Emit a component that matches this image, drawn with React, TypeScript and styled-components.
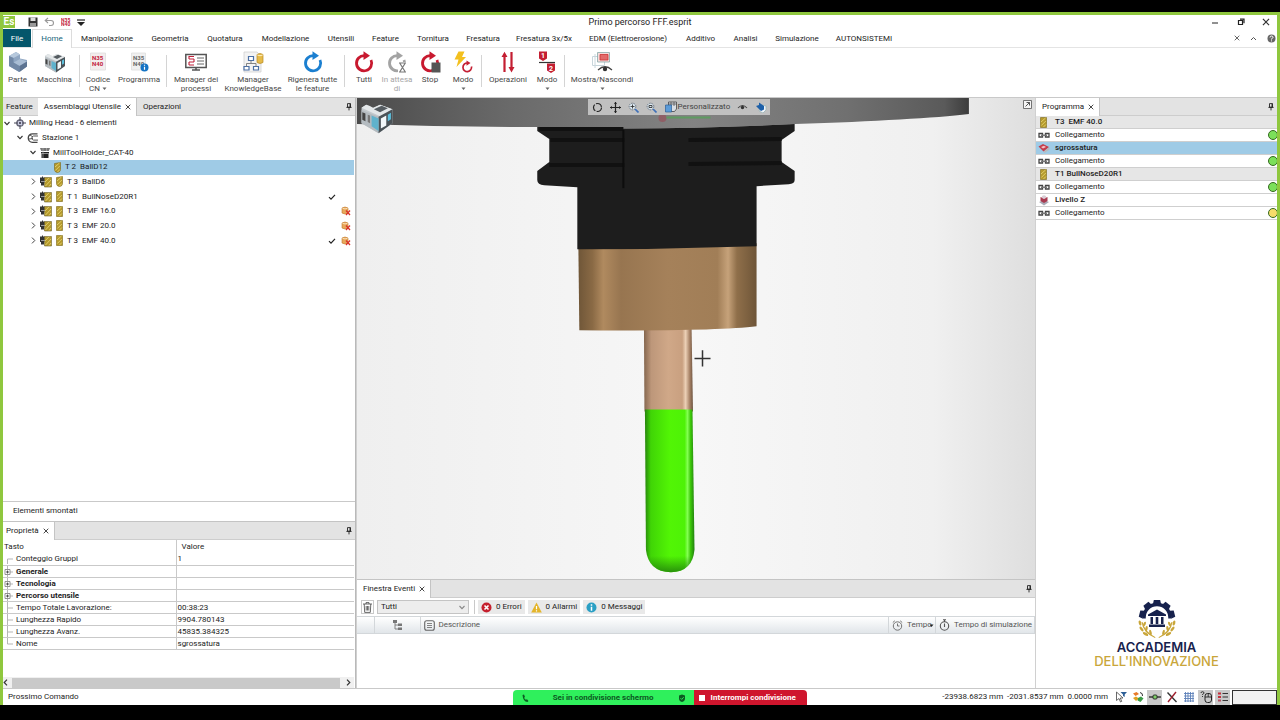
import React from "react";
import styled, { createGlobalStyle, css } from "styled-components";

const GlobalStyle = createGlobalStyle`
  * { box-sizing: border-box; }
  body { margin: 0; background: #000; }
  button, select, table { font: inherit; color: inherit; }
  button { border: 0; background: none; padding: 0; margin: 0; white-space: nowrap; }
  svg { display: block; flex: none; }
`;

/* ---------- frame ---------- */

const Screen = styled.div`
  display: flex;
  flex-direction: column;
  min-height: 100vh;
  padding: 12px 0 15px;
  background: #000;
  font: 8px/12px Roboto, "Open Sans", sans-serif;
  color: #1c1c1c;
`;

const Frame = styled.div`
  flex: 1;
  display: flex;
  flex-direction: column;
  border: 3px solid #8fc73e;
  border-bottom: 0;
  background: #fff;
`;

/* ---------- title bar ---------- */

const TitleBar = styled.header`
  display: grid;
  grid-template-columns: 1fr auto 1fr;
  align-items: center;
  height: 14px;
`;

const QuickAccess = styled.div`
  display: flex;
  align-items: center;
  gap: 6px;
`;

const AppBadge = styled.span`
  width: 12px;
  margin-right: 7px;
  background: #8fc73e;
  color: #fff;
  font-size: 10px;
  font-weight: 600;
  text-align: center;
`;

const Title = styled.h1`
  margin: 0;
  font-size: 9px;
  font-weight: 400;
`;

const WindowButtons = styled.div`
  display: flex;
  justify-content: flex-end;
  gap: 16px;
  padding-right: 7px;
`;

/* ---------- menu ---------- */

const MenuBar = styled.nav`
  display: flex;
  align-items: stretch;
  height: 19px;
  border-bottom: 1px solid #e4e4e4;
`;

const MenuTab = styled.button<{ $w: number; $kind?: "file" | "active" }>`
  min-width: ${(p) => p.$w}px;
  padding-top: 1px;
  ${(p) =>
    p.$kind === "file" &&
    css`
      margin-right: 1px;
      background: #04566b;
      color: #fff;
    `}
  ${(p) =>
    p.$kind === "active" &&
    css`
      margin-bottom: -1px;
      padding-top: 0;
      border: 1px solid #dcdcdc;
      border-bottom: 0;
      background: #fff;
      color: #17657a;
    `}
`;

const MenuTools = styled.div`
  display: flex;
  align-items: center;
  gap: 10px;
  margin-left: auto;
  padding-right: 1px;
`;

/* ---------- ribbon ---------- */

const Ribbon = styled.div`
  display: flex;
  height: 50px;
  border-bottom: 1px solid #c9c9c9;
`;

const RibbonGroup = styled.div`
  display: flex;
  align-items: flex-start;
  padding-right: 2px;
  & + & {
    padding-left: 2px;
    border-left: 1px solid #dadada;
    border-image: linear-gradient(#fff 8px, #d4d4d4 8px, #d4d4d4 38px, #fff 38px) 1;
  }
`;

const RibbonButton = styled.button<{ $w: number; $muted?: boolean }>`
  display: flex;
  flex-direction: column;
  align-items: center;
  width: ${(p) => p.$w}px;
  padding-top: 3px;
  color: ${(p) => (p.$muted ? "#a5a5a5" : "#484848")};
  line-height: 9px;
  svg { margin-bottom: 2px; }
`;

const RibbonLabel = styled.span`
  display: flex;
  flex-direction: column;
  align-items: center;
`;

const RibbonLine = styled.span`
  display: flex;
  gap: 2px;
  svg { margin: 0; }
`;

/* ---------- docked panels ---------- */

const Workspace = styled.main`
  flex: 1;
  display: grid;
  grid-template-columns: 353px minmax(0, 1fr) 241px;
  border-bottom: 1px solid #c9c9c9;
`;

const Dock = styled.section`
  display: flex;
  flex-direction: column;
  min-width: 0;
  background: #fff;
`;

const LeftDock = styled(Dock)`
  border-right: 1px solid #b9b9b9;
`;

const CenterDock = styled(Dock)`
  border: solid #d0d0d0;
  border-width: 0 1px;
`;

const TabStrip = styled.div<{ $top?: boolean }>`
  display: flex;
  align-items: stretch;
  height: ${(p) => (p.$top ? 19 : 18)}px;
  background: #e3e3e3;
  border-bottom: 1px solid #cdcdcd;
  ${(p) => p.$top && css`border-top: 1px solid #c4c4c4;`}
`;

const DockTab = styled.button<{ $active?: boolean; $wide?: boolean }>`
  display: flex;
  align-items: center;
  gap: 4px;
  padding: 0 5px 0 ${(p) => (p.$wide ? 6 : 3)}px;
  ${(p) =>
    p.$active &&
    css`
      margin-bottom: -1px;
      border-right: 1px solid #c4c4c4;
      background: #fff;
    `}
`;

const PinButton = styled.button`
  margin-left: auto;
  padding-right: 3px;
`;

/* ---------- tool tree ---------- */

const Tree = styled.ul`
  display: grid;
  grid-auto-rows: 1fr;
  height: 132px;
  margin: 0 0 auto;
  padding: 0;
  list-style: none;
`;

const TreeRow = styled.li<{ $depth: number; $selected?: boolean }>`
  display: flex;
  align-items: center;
  gap: 3px;
  margin-right: 1px;
  padding-left: ${(p) => p.$depth * 13}px;
  background: ${(p) => (p.$selected ? "#9fcbe6" : "none")};
`;

const Twisty = styled.button`
  width: 8px;
  height: 12px;
  display: flex;
  align-items: center;
  justify-content: center;
`;

const RowMarks = styled.span`
  display: flex;
  align-items: center;
  gap: 5px;
  margin-left: auto;
  padding-right: 3px;
`;

const MarkSlot = styled.span`
  width: 10px;
  height: 10px;
`;

const Unmounted = styled.div`
  height: 20px;
  padding: 3px 10px;
  border-top: 1px solid #c9c9c9;
`;

/* ---------- properties ---------- */

const PropertyPane = styled.div`
  min-height: 137px;
`;

const PropertyTable = styled.table`
  width: 351px;
  table-layout: fixed;
  border-collapse: collapse;
  line-height: 11px;
  th, td {
    height: 12px;
    padding: 0 0 0 1px;
    text-align: left;
    font-weight: 400;
  }
  td + td { border-left: 1px solid #c9c9c9; }
  thead th { height: 13px; }
  thead th + th { padding-left: 5px; border-left: 1px solid #c9c9c9; }
  tbody tr { border-bottom: 1px solid #c9c9c9; }
`;

const PropertyName = styled.span<{ $bold?: boolean }>`
  display: flex;
  align-items: center;
  gap: 2px;
  font-weight: ${(p) => (p.$bold ? 700 : 400)};
`;

const HScroll = styled.div`
  display: flex;
  align-items: center;
  justify-content: space-between;
  gap: 4px;
  height: 11px;
  margin-right: 1px;
  background: #f0f0f0;
`;

const HThumb = styled.div`
  flex: 1;
  height: 10px;
  margin-right: 2px;
  background: #c9c9c9;
`;

/* ---------- 3D view ---------- */

const Viewport = styled.div`
  position: relative;
  flex: 1;
  min-height: 300px;
  overflow: hidden;
  background: #f3f3f3;
`;

const Scene = styled.svg`
  position: absolute;
  inset: 0;
  width: 100%;
  height: 100%;
`;

const MachineBadge = styled.div`
  position: absolute;
  top: 2px;
  left: 3px;
`;

const ViewTools = styled.div`
  position: absolute;
  top: 1px;
  left: 34%;
  display: flex;
  align-items: center;
  gap: 7px;
  height: 16px;
  padding: 0 3px 0 4px;
  background: #c0c0c0;
  color: #444;
`;

const ViewMode = styled.button`
  display: flex;
  align-items: center;
  gap: 1px;
  margin-left: 1px;
`;

const PopOut = styled.button`
  position: absolute;
  top: 2px;
  right: 3px;
`;

/* ---------- events ---------- */

const EventBar = styled.div`
  display: flex;
  align-items: center;
  gap: 3px;
  height: 18px;
  padding-left: 4px;
`;

const TrashButton = styled.button`
  display: grid;
  place-items: center;
  width: 13px;
  height: 14px;
  border: 1px solid #c9c9c9;
`;

const FilterBox = styled.label`
  display: flex;
  align-items: center;
  width: 92px;
  height: 14px;
  margin-right: 2px;
  padding-right: 3px;
  border: 1px solid #c4c4c4;
  background: #ededed;
`;

const FilterSelect = styled.select`
  flex: 1;
  appearance: none;
  border: 0;
  padding: 0 3px;
  background: none;
`;

const Counter = styled.button`
  display: flex;
  align-items: center;
  gap: 4px;
  height: 14px;
  padding: 0 3px;
  background: #e9e9e9;
`;

const Divider = styled.span`
  width: 1px;
  height: 14px;
  background: #c9c9c9;
`;

const EventTable = styled.table`
  width: 100%;
  height: 18px;
  margin: 0 0 54px;
  table-layout: fixed;
  border-collapse: collapse;
  color: #555;
  tr { background: linear-gradient(#fff, #dfe4e8); }
  th {
    height: 17px;
    padding: 0 3px;
    border: solid #d3d7da;
    border-width: 1px 1px 1px 0;
    font-weight: 400;
    text-align: left;
  }
`;

const HeadCell = styled.span<{ $center?: boolean }>`
  display: flex;
  align-items: center;
  justify-content: ${(p) => (p.$center ? "center" : "flex-start")};
  gap: 4px;
  white-space: nowrap;
`;

const SortMark = styled.span`
  margin-left: -7px;
`;

/* ---------- program ---------- */

const ProgramList = styled.ul`
  margin: 0;
  padding: 0;
  list-style: none;
`;

const ProgramRow = styled.li<{ $kind: "tool" | "link" | "op"; $selected?: boolean }>`
  display: flex;
  align-items: center;
  gap: 6px;
  height: 13px;
  padding-left: 2px;
  border-bottom: 1px solid #cfcfcf;
  overflow: hidden;
  font-weight: ${(p) => (p.$kind === "link" ? 400 : 500)};
  background: ${(p) => (p.$selected ? "#9fcbe6" : p.$kind === "tool" ? "#e6e6e6" : "#fff")};
`;

const StatusLamp = styled.i<{ $color: string }>`
  width: 10px;
  height: 10px;
  margin-left: auto;
  margin-right: -1px;
  border: 1px solid #356a20;
  border-radius: 50%;
  background: ${(p) => p.$color};
`;

const Brand = styled.div`
  display: flex;
  flex-direction: column;
  align-items: center;
  margin: auto 0 20px;
  font: 13px/14px Inter, sans-serif;
`;

const BrandLine = styled.span<{ $gold?: boolean }>`
  font-weight: ${(p) => (p.$gold ? 500 : 600)};
  color: ${(p) => (p.$gold ? "#c9a63a" : "#17224d")};
`;

/* ---------- status bar ---------- */

const StatusBar = styled.footer`
  position: relative;
  display: flex;
  align-items: center;
  height: 16px;
  padding-left: 5px;
`;

const Coordinates = styled.span`
  margin-left: auto;
  margin-right: 5px;
  white-space: pre;
`;

const StatusTool = styled.button<{ $on?: boolean }>`
  display: grid;
  place-items: center;
  width: 17px;
  height: 15px;
  border-right: 2px solid #fff;
  background: ${(p) => (p.$on ? "#c9c9c9" : "none")};
`;

const ProgressBox = styled.div`
  width: 45px;
  height: 15px;
  border: 1px solid #333;
  background: #f2f2f2;
`;

const ShareBar = styled.div`
  position: absolute;
  left: 40%;
  bottom: 0;
  display: flex;
  height: 15px;
  font-weight: 700;
`;

const ShareState = styled.div`
  display: flex;
  align-items: center;
  justify-content: space-between;
  width: 181px;
  padding: 0 8px;
  border-radius: 4px 0 0 0;
  background: #2ff05c;
  color: #0c5a22;
`;

const ShareStop = styled.button`
  display: flex;
  align-items: center;
  gap: 6px;
  width: 113px;
  padding-left: 5px;
  border-radius: 0 4px 0 0;
  background: #cf152d;
  color: #fff;
`;

/* ---------- icons ---------- */

type IconProps = { w: number; h?: number; box?: string; children: React.ReactNode };
const Icon = ({ w, h, box, children }: IconProps) => (
  <svg width={w} height={h ?? w} viewBox={box ?? `0 0 ${w} ${h ?? w}`} fill="none" aria-hidden="true">
    {children}
  </svg>
);

const Cross = ({ size = 6, color = "#333" }: { size?: number; color?: string }) => (
  <Icon w={size} box="0 0 6 6"><path d="M.7.7l4.6 4.6M5.3.7L.7 5.3" stroke={color} strokeWidth=".9" /></Icon>
);

const Pin = () => (
  <Icon w={6} h={8}><path d="M1.5.6h3v3.6h-3zM.4 4.4h5.2M3 4.4v3M4 .6v3.6" stroke="#222" strokeWidth=".9" /></Icon>
);

const ChevronDown = ({ color = "#333" }: { color?: string }) => (
  <Icon w={6} h={5}><path d="M.5 1l2.5 2.6L5.500 1" stroke={color} strokeWidth="1.1" /></Icon>
);

const ChevronRight = () => (
  <Icon w={5} h={7}><path d="M1 .6l2.800 2.900L1 6.400" stroke="#444" strokeWidth="1" /></Icon>
);

const SmallArrow = ({ color = "#666" }: { color?: string }) => (
  <Icon w={5} h={9}><path d="M.5 3.500h4L2.500 6z" fill={color} /></Icon>
);

const Check = () => (
  <Icon w={8} h={8}><path d="M1 4.200l2 2L7 1.800" stroke="#222" strokeWidth="1.200" /></Icon>
);

const Cutter = ({ round }: { round?: boolean }) => (
  <Icon w={9} h={11}>
    <path d={round ? "M1.500 1.500L7.500.5v7.500Q7 10.500 4.300 10.500Q1.500 10 1.500 7.500z" : "M1.500.5h6v10h-6z"} fill="#b59a2c" stroke="#7b6618" strokeWidth=".6" />
    <path d="M2 5L6.500 1M2.300 8.500L6.800 4M4.500 10l2.400-2.500" stroke="#e0ce6c" strokeWidth="1" />
  </Icon>
);

const HolderCutter = () => (
  <Icon w={12} h={12}>
    <path d="M0 1.500h2v-1h1v1h2v5H4v3H1V7H0z" fill="#333" />
    <path d="M4.500 1.500h7v9.500h-7z" fill="#b59a2c" stroke="#6f6430" strokeWidth=".6" />
    <path d="M5 6l4-4.200M5.500 10l5.500-6M9 10.500l2-2.500" stroke="#e0ce6c" strokeWidth="1" />
    <path d="M1 5.500h4" stroke="#999" />
  </Icon>
);

const BadDatabase = () => (
  <Icon w={10} h={10}>
    <path d="M1 2q3-2 6 0v5q-3 2-6 0z" fill="#e8a85c" stroke="#c07a2d" strokeWidth=".6" />
    <path d="M1.500 2.300q2.500 1.200 5 0" stroke="#fbe0b5" />
    <path d="M5 4.500l4 4.500M9 4.500L5 9" stroke="#d8342a" strokeWidth="1.300" />
  </Icon>
);

const SpindleIcon = () => (
  <Icon w={12} h={12}>
    <circle cx="6" cy="6" r="3.200" stroke="#667" strokeWidth="1.300" fill="#c9cbe0" />
    <path d="M6 0v4M6 8v4M0 6h4M8 6h4" stroke="#445" strokeWidth="1" />
    <circle cx="6" cy="6" r="1" fill="#334" />
  </Icon>
);

const StationIcon = () => (
  <Icon w={12} h={12}>
    <path d="M10.500 1.800H5.500a4.200 4.200 0 0 0 0 8.500h5" stroke="#444" strokeWidth="1.300" />
    <path d="M11 4H6.500a2.100 2.100 0 0 0 0 4.100H11M3 3l3 2M2 7l4-.5" stroke="#555" strokeWidth="1" />
  </Icon>
);

const HolderIcon = () => (
  <Icon w={10} h={11}>
    <path d="M0 1h10L8.800 4H1.200z" fill="#777" />
    <path d="M1 5h8v1.500H1zM1.500 7h7v4h-7z" fill="#222" />
    <path d="M3 1v10M6.500 1v3" stroke="#bbb" strokeWidth=".6" />
  </Icon>
);

const ArrowRing = ({ color, children }: { color: string; children?: React.ReactNode }) => (
  <Icon w={22} h={22}>
    <path d="M11.500 4.600A7.600 7.600 0 1 0 18 9" stroke={color} strokeWidth="2.800" />
    <path d="M10.500.2l6.500 4.600-6.500 4.200z" fill={color} />
    {children}
  </Icon>
);

const PartIcon = () => (
  <Icon w={22}>
    <path d="M2 5l7-4 4 2.500v4L20 9v6.500L12 21 2 15z" fill="#8fa6c2" />
    <path d="M2 5l7-4 4 2.500L6.500 7z" fill="#b6c8dc" />
    <path d="M6.500 11.500L13 8l7 2.500L12.500 15z" fill="#a9bdd4" />
    <path d="M2 5l4.500 2v4.500l6 3.500V21L2 15z" fill="#7188a6" />
    <path d="M12.500 15L20 10.500v5L12.500 21z" fill="#5c7391" />
  </Icon>
);

const MachineIcon = ({ size = 22 }: { size?: number }) => (
  <Icon w={size} box="0 0 22 22">
    <path d="M1 5l3-2 3 1.500 1 1L13 3l8 3v9l-9 6.500L1 15z" fill="#c3c9cd" />
    <path d="M1 5l3-2 2 .8L8.500 5 13 3l8 3-8 4.500z" fill="#e3e7e9" />
    <path d="M9 6l5-2.200 4 1.500-5 2.700z" fill="#555c61" />
    <path d="M1 6.500l11 4.300v10.700L1 15z" fill="#b4bbc0" />
    <path d="M12 10.800l9-4.800v9l-9 6.500z" fill="#4a5257" />
    <path d="M7.500 10l4.500 2v8l-4.500-3z" fill="#5fb2cc" />
    <path d="M13.500 12l3.500-2v6.500l-3.500 2z" fill="#f2f7f9" />
    <path d="M18 9.500l2-1.200v4.200l-2 1.200z" fill="#5cc0dd" />
    <path d="M1.500 8l2 .8v5l-2-1z" fill="#444" />
    <path d="M5 9.500l1.500.6v5L5 14.300z" fill="#777" />
  </Icon>
);

const CodeText = ({ fill, x = 4 }: { fill: string; x?: number }) => (
  <g fill={fill} fontFamily="Roboto, sans-serif" fontSize="6" fontWeight="700">
    <text x={x} y="8.500">N35</text>
    <text x={x} y="14.500">N40</text>
  </g>
);

const CodeIcon = () => (
  <Icon w={20} h={22}><path d="M2.500 2h15v17h-15z" fill="#f3eded" stroke="#ddd" strokeWidth=".8" /><CodeText fill="#c2203a" /></Icon>
);

const ProgramIcon = () => (
  <Icon w={20} h={22}>
    <path d="M2.500 2h14v17h-14z" fill="#f0f0f0" stroke="#ddd" strokeWidth=".8" />
    <CodeText fill="#666" />
    <circle cx="15.500" cy="16.500" r="4" fill="#1473c4" />
    <path d="M15.500 15.700v3M15.500 13.800v1" stroke="#fff" strokeWidth="1.200" />
  </Icon>
);

const ProcessIcon = () => (
  <Icon w={22}>
    <path d="M.8 3.500h20.400v13H.8z" stroke="#555" strokeWidth="1.500" fill="#fff" />
    <path d="M7 19h8M11 17v2" stroke="#555" strokeWidth="1.600" />
    <path d="M4 5.500h5M4 8h5M4 11h5M4 14h5M4 5v3M9 8v3M4 11v3" stroke="#c2203a" strokeWidth="1.100" />
    <path d="M12 7h7M12 10h7M12 13h7" stroke="#666" strokeWidth="1" />
  </Icon>
);

const KnowledgeIcon = () => (
  <Icon w={22}>
    <path d="M2 1h13l4 4v16H2z" fill="#f3f3f3" stroke="#ccc" strokeWidth=".7" />
    <path d="M6.500 5.500h5v4h-5zM2 15.500h5V19H2zM11.500 15.500h5V19h-5z" fill="#fff" stroke="#4a6fa5" strokeWidth="1.200" />
    <path d="M9 9.500v3M4.500 15.500v-3H14v3" stroke="#777" strokeWidth=".9" />
    <path d="M15 3.500q3-2 6 0v8q-3 2-6 0z" fill="#e6bb4a" stroke="#b78a22" strokeWidth=".7" />
    <path d="M15.300 4q2.700 1.500 5.400 0" stroke="#fff1c4" />
  </Icon>
);

const UpDownIcon = () => (
  <Icon w={16} h={22}>
    <path d="M4.500 4v17M11.500 1v17" stroke="#c41e32" strokeWidth="2.200" />
    <path d="M1.500 6L4.500.8 7.500 6zM8.500 16l3 5.500 3-5.500z" fill="#c41e32" />
  </Icon>
);

const ShieldsIcon = () => (
  <Icon w={20} h={22}>
    <path d="M2 .5h8v7l-4 2.500-4-2.500zM10 12.500h8v7L14 22l-4-2.500z" fill="#c41e32" />
    <path d="M2 11.500h16" stroke="#333" strokeWidth="1.200" />
    <g fill="#fff" fontFamily="Roboto, sans-serif" fontSize="7" fontWeight="700">
      <text x="4" y="7">1</text>
      <text x="12" y="19.500">2</text>
    </g>
  </Icon>
);

const ModeIcon = () => (
  <Icon w={20} h={22}>
    <path d="M5.500.5h6L9 6h4L3.500 16l2-7.500H1.500z" fill="#f3c01f" />
    <path d="M14.500 12a4.300 4.300 0 1 0 4 3.500" stroke="#c41e32" strokeWidth="1.700" />
    <path d="M13.500 9.500l4 2.600-4 2.600z" fill="#c41e32" />
  </Icon>
);

const ShowHideIcon = () => (
  <Icon w={22}>
    <path d="M1.500 5.500h12v9h-12zM4 3v14" stroke="#c8d6dc" strokeWidth="1" />
    <path d="M6.500 1.500h12v9.500h-12z" fill="#f6dada" stroke="#8aa" strokeWidth=".8" />
    <path d="M9 3.500h8v5.500H9z" fill="#e26a6a" stroke="#c33" strokeWidth=".8" />
    <path d="M7 19q7-6.500 14 0" stroke="#444" strokeWidth="1.200" />
    <circle cx="14" cy="18" r="2.200" fill="#333" />
  </Icon>
);

const SaveIcon = () => (
  <Icon w={10}><path d="M.5.500h9v9h-9z" fill="#333" /><path d="M2.500.5h5v3.500h-5z" fill="#ddd" /><path d="M2 6h6v3.500H2z" fill="#999" /></Icon>
);

const UndoIcon = () => (
  <Icon w={11} h={10}><path d="M4 1L1.200 3.500 4 6M1.500 3.500h5.500a2.500 2.500 0 0 1 0 5H5" stroke="#999" strokeWidth="1.100" /></Icon>
);

const QuickCodeIcon = () => (
  <Icon w={10}>
    <g fill="#c2203a" fontFamily="Roboto, sans-serif" fontSize="5" fontWeight="700"><text x="0" y="4.500">N35</text><text x="0" y="9">N40</text></g>
  </Icon>
);

const LinkIcon = () => (
  <Icon w={12} h={9}>
    <path d="M1 2.500h3.500v3.500H1zM7.500 2.500H11v3.500H7.500z" stroke="#444" strokeWidth="1.300" />
    <path d="M3 4.300h6" stroke="#777" strokeWidth="1.600" />
  </Icon>
);

const RoughIcon = () => (
  <Icon w={12} h={10}>
    <path d="M.5 3.500L5 1l6 3-5.500 4.500z" fill="#c43c4a" />
    <path d="M6 8.500L11.500 4v2.500L6.500 10z" fill="#b9b9b9" />
    <path d="M3 4l3-1.300 2 1.300-3 1.500z" fill="#f0c0c4" />
  </Icon>
);

const ZLevelIcon = () => (
  <Icon w={12} h={11}>
    <path d="M1 7l5-2 5 2-5 3.500z" fill="#a9a9b5" />
    <path d="M2.500 2l3.500 1.500L9.500 2v4L6 8 2.500 6z" fill="#a83a50" />
    <path d="M4 1l2-.7L8 1v2L6 4 4 3z" fill="#d9cdd5" />
  </Icon>
);

const Magnifier = ({ mark }: { mark: string }) => (
  <Icon w={11}>
    <circle cx="4.500" cy="4.500" r="3.300" stroke="#5a6470" strokeWidth=".9" strokeDasharray="1.500 .8" fill="#dbe7f0" />
    <path d={mark} stroke="#333" strokeWidth=".9" />
    <path d="M7 7l3.500 3.500" stroke="#3f70b8" strokeWidth="1.700" />
  </Icon>
);

const BrandMark = () => (
  <Icon w={40} h={40}>
    <path d="M7 18.500v-1a13 13 0 0 1 26 0v1" stroke="#17224d" strokeWidth="3.500" />
    <g fill="#17224d">
      {[-76, -38, 0, 38, 76].map((a) => (
        <path key={a} d="M16 4l.8-4h6.400l.8 4z" transform={`rotate(${a} 20 18)`} />
      ))}
    </g>
    <path d="M20 9.500l9 5v1.500H11v-1.500zM12 24.500h16V27H12zM13.500 17h2.500v7h-2.500zM18.700 17h2.600v7h-2.600zM24 17h2.500v7H24z" fill="#17224d" />
    <g fill="#c9a63a">
      {[0, 1].map((i) => (
        <g key={i} transform={i ? "translate(40 0) scale(-1 1)" : undefined}>
          <ellipse cx="3" cy="23" rx="1.300" ry="2.600" transform="rotate(-15 3 23)" />
          <ellipse cx="7.500" cy="24" rx="1.200" ry="2.400" transform="rotate(25 7.500 24)" />
          <ellipse cx="4.500" cy="29" rx="1.300" ry="2.800" transform="rotate(-40 4.500 29)" />
          <ellipse cx="9.500" cy="28.500" rx="1.200" ry="2.600" transform="rotate(10 9.500 28.500)" />
          <ellipse cx="8.500" cy="34" rx="1.300" ry="3" transform="rotate(-62 8.500 34)" />
          <ellipse cx="13.500" cy="32.500" rx="1.200" ry="2.800" transform="rotate(-15 13.500 32.500)" />
          <path d="M4.500 22Q6 33 18 38l.5-.8Q8 32 5.500 22z" />
        </g>
      ))}
    </g>
  </Icon>
);

const ToolScene = () => (
  <Scene viewBox="0 0 677 482" preserveAspectRatio="xMidYMin slice" role="img" aria-label="Vista 3D utensile">
    <defs>
      <linearGradient id="bg"><stop offset="0" stopColor="#efefef" /><stop offset=".5" stopColor="#f7f7f7" /><stop offset=".85" stopColor="#f0f0f0" /><stop offset="1" stopColor="#dedede" /></linearGradient>
      <linearGradient id="disc"><stop offset="0" stopColor="#4b4b4b" /><stop offset=".25" stopColor="#6a6a6a" /><stop offset=".55" stopColor="#838383" /><stop offset=".8" stopColor="#707070" /><stop offset=".96" stopColor="#5a5a5a" /><stop offset="1" stopColor="#3c3c3c" /></linearGradient>
      <linearGradient id="collet"><stop offset="0" stopColor="#6f5638" /><stop offset=".08" stopColor="#8a6a45" /><stop offset=".14" stopColor="#b08a5f" /><stop offset=".24" stopColor="#977550" /><stop offset=".5" stopColor="#a5815a" /><stop offset=".78" stopColor="#a17e57" /><stop offset=".84" stopColor="#c6a27a" /><stop offset=".89" stopColor="#8f6f4a" /><stop offset="1" stopColor="#6e5538" /></linearGradient>
      <linearGradient id="shank"><stop offset="0" stopColor="#84664e" /><stop offset=".15" stopColor="#bd977a" /><stop offset=".5" stopColor="#d0a888" /><stop offset=".78" stopColor="#c9a080" /><stop offset=".85" stopColor="#ecd0b6" /><stop offset=".93" stopColor="#a98468" /><stop offset="1" stopColor="#6d5440" /></linearGradient>
      <linearGradient id="flute"><stop offset="0" stopColor="#27850c" /><stop offset=".12" stopColor="#40d506" /><stop offset=".5" stopColor="#52f505" /><stop offset=".8" stopColor="#4ef207" /><stop offset=".86" stopColor="#84ff52" /><stop offset=".92" stopColor="#3cc80a" /><stop offset="1" stopColor="#228010" /></linearGradient>
      <linearGradient id="tip" x1="0" y1="0" x2="0" y2="1"><stop offset=".9" stopColor="#1f7a0c" stopOpacity="0" /><stop offset="1" stopColor="#1f7a0c" stopOpacity=".8" /></linearGradient>
    </defs>
    <path d="M0 0h677v482H0z" fill="url(#bg)" />
    <path d="M0 0h611v16Q560 22 437 26Q300 33 180 29Q90 29 0 26z" fill="url(#disc)" />
    <path d="M286.500 225h47.500l1.500 88h-48.500z" fill="url(#shank)" />
    <path d="M221 145h178v83q-40 5-177 4z" fill="url(#collet)" />
    <path d="M180 29Q300 33 437 26v7l-13 9v22l13 9v9q0 4-6 4l-32 2v60q-90 3-179 3V89l-33-2q-7 0-7-5V73l12-9V41l-12-8z" fill="#1d1d1d" />
    <path d="M182 31h84M193 42h74M331 42l93-1M192 67h75M331 66l93-1" stroke="#111" strokeWidth="4" />
    <path d="M266 32v58" stroke="#0d0d0d" strokeWidth="2" />
    <path d="M287.500 311h47.500l2 140q-2 22-23.500 22.500q-22.500-.5-25-22.500z" fill="url(#flute)" />
    <path d="M287.500 311h47.500l2 140q-2 22-23.500 22.500q-22.500-.5-25-22.500z" fill="url(#tip)" />
    <circle cx="305" cy="20" r="4" fill="#9a4a55" opacity=".6" />
    <path d="M309 19.500h44" stroke="#4fa653" strokeWidth="2" opacity=".7" />
    <path d="M337 260h16M345 252v16" stroke="#333" strokeWidth="1.500" />
  </Scene>
);

/* ---------- data ---------- */

const menus: [string, number][] = [
  ["Manipolazione", 70], ["Geometria", 56], ["Quotatura", 54], ["Modellazione", 67], ["Utensili", 44],
  ["Feature", 45], ["Tornitura", 50], ["Fresatura", 50], ["Fresatura 3x/5x", 72], ["EDM (Elettroerosione)", 96],
  ["Additivo", 49], ["Analisi", 41], ["Simulazione", 62], ["AUTONSISTEMI", 72],
];

type Tool = { label: string; w: number; icon: React.ReactNode; muted?: boolean };
const ribbon: Tool[][] = [
  [
    { label: "Parte", w: 29, icon: <PartIcon /> },
    { label: "Macchina", w: 45, icon: <MachineIcon /> },
  ],
  [
    { label: "Codice\nCN ▾", w: 32, icon: <CodeIcon /> },
    { label: "Programma", w: 50, icon: <ProgramIcon /> },
  ],
  [
    { label: "Manager dei\nprocessi", w: 54, icon: <ProcessIcon /> },
    { label: "Manager\nKnowledgeBase", w: 60, icon: <KnowledgeIcon /> },
    { label: "Rigenera tutte\nle feature", w: 59, icon: <ArrowRing color="#1b7fd0" /> },
  ],
  [
    { label: "Tutti", w: 34, icon: <ArrowRing color="#c8192f" /> },
    {
      label: "In attesa\ndi",
      w: 32,
      muted: true,
      icon: (
        <ArrowRing color="#a3a3a3">
          <path d="M12 11h9v10h-9z" fill="#fff" />
          <path d="M13 12h7M13 21h7M14 12.500l5 8M19 12.500l-5 8" stroke="#777" strokeWidth="1.200" />
        </ArrowRing>
      ),
    },
    { label: "Stop", w: 34, icon: <ArrowRing color="#c8192f"><path d="M12.500 11.500h9v10h-9z" fill="#555" /></ArrowRing> },
    { label: "Modo\n▾", w: 32, icon: <ModeIcon /> },
  ],
  [
    { label: "Operazioni", w: 48, icon: <UpDownIcon /> },
    { label: "Modo\n▾", w: 30, icon: <ShieldsIcon /> },
  ],
  [{ label: "Mostra/Nascondi\n▾", w: 70, icon: <ShowHideIcon /> }],
];

const assemblies = [
  { name: "T 3  BallD6", round: true },
  { name: "T 1  BullNoseD20R1", check: true },
  { name: "T 3  EMF 16.0", bad: true },
  { name: "T 3  EMF 20.0", bad: true },
  { name: "T 3  EMF 40.0", check: true, bad: true },
];

const properties: { name: string; value?: string; group?: boolean }[] = [
  { name: "Conteggio Gruppi", value: "1" },
  { name: "Generale", group: true },
  { name: "Tecnologia", group: true },
  { name: "Percorso utensile", group: true },
  { name: "Tempo Totale Lavorazione:", value: "00:38:23" },
  { name: "Lunghezza Rapido", value: "9904.780143" },
  { name: "Lunghezza Avanz.", value: "45835.384325" },
  { name: "Nome", value: "sgrossatura" },
];

const GREEN = "#7be05a";
const program: { name: string; kind: "tool" | "link" | "op"; icon?: React.ReactNode; lamp?: string; selected?: boolean }[] = [
  { name: "T3  EMF 40.0", kind: "tool" },
  { name: "Collegamento", kind: "link", lamp: GREEN },
  { name: "sgrossatura", kind: "op", icon: <RoughIcon />, selected: true },
  { name: "Collegamento", kind: "link", lamp: GREEN },
  { name: "T1 BullNoseD20R1", kind: "tool" },
  { name: "Collegamento", kind: "link", lamp: GREEN },
  { name: "Livello Z", kind: "op", icon: <ZLevelIcon /> },
  { name: "Collegamento", kind: "link", lamp: "#f6dc6a" },
];

const IconSlot = styled.span`
  display: grid;
  place-items: center;
  width: 11px;
`;

const Label = styled.span`
  white-space: pre;
`;

/* ---------- page ---------- */

const RibbonItem = ({ tool }: { tool: Tool }) => (
  <RibbonButton $w={tool.w} $muted={tool.muted}>
    {tool.icon}
    <RibbonLabel>
      {tool.label.split("\n").map((line) => (
        <RibbonLine key={line}>
          {line.replace("▾", "").trim()}
          {line.endsWith("▾") && <SmallArrow />}
        </RibbonLine>
      ))}
    </RibbonLabel>
  </RibbonButton>
);

const TreeGuide = ({ i, group }: { i: number; group?: boolean }) => (
  <Icon w={10} h={11}>
    <path d={i === 0 ? "M3.500 6v5M3.500 6H9" : i === 7 ? "M3.500 0v6H9" : "M3.500 0v11M3.500 6H9"} stroke="#b5b5b5" />
    {group && (
      <>
        <path d="M1 3.500h5v5H1z" fill="#fff" stroke="#888" strokeWidth=".9" />
        <path d="M2 6h3M3.500 4.500v3" stroke="#333" strokeWidth=".8" />
      </>
    )}
  </Icon>
);

export default function App() {
  return (
    <Screen>
      <GlobalStyle />
      <Frame>
        <TitleBar>
          <QuickAccess>
            <AppBadge>Es</AppBadge>
            <button aria-label="Salva"><SaveIcon /></button>
            <button aria-label="Annulla"><UndoIcon /></button>
            <button aria-label="Codice CN"><QuickCodeIcon /></button>
            <button aria-label="Personalizza">
              <Icon w={8} h={7}><path d="M0 1h8" stroke="#222" strokeWidth="1.200" /><path d="M0 3h8L4 7z" fill="#222" /></Icon>
            </button>
          </QuickAccess>
          <Title>Primo percorso FFF.esprit</Title>
          <WindowButtons>
            <button aria-label="Riduci"><Icon w={10} h={8}><path d="M2 5h6" stroke="#222" /></Icon></button>
            <button aria-label="Ripristina"><Icon w={10} h={8}><path d="M2.500 2.500h4v4h-4zM4 1.200h4v4" stroke="#222" strokeWidth="1.200" /></Icon></button>
            <button aria-label="Chiudi"><Cross size={8} /></button>
          </WindowButtons>
        </TitleBar>

        <MenuBar>
          <MenuTab $w={28} $kind="file">File</MenuTab>
          <MenuTab $w={40} $kind="active">Home</MenuTab>
          {menus.map(([label, w]) => <MenuTab key={label} $w={w}>{label}</MenuTab>)}
          <MenuTools>
            <button aria-label="Chiudi documento"><Cross size={6} color="#555" /></button>
            <button aria-label="Comprimi"><Icon w={7} h={5}><path d="M1 4l2.500-2.500L6 4" stroke="#555" /></Icon></button>
            <button aria-label="Guida">
              <Icon w={9}><circle cx="4.500" cy="4.500" r="4" fill="#666" /><path d="M3 3.500q0-1.500 1.500-1.500T6 3.400q0 .8-1.500 1.400v.7M4.500 6.400v1" stroke="#fff" /></Icon>
            </button>
          </MenuTools>
        </MenuBar>

        <Ribbon>
          {ribbon.map((group, i) => (
            <RibbonGroup key={i}>{group.map((tool) => <RibbonItem key={tool.label} tool={tool} />)}</RibbonGroup>
          ))}
        </Ribbon>

        <Workspace>
          <LeftDock>
            <TabStrip>
              <DockTab>Feature</DockTab>
              <DockTab $active $wide>Assemblaggi Utensile <Cross /></DockTab>
              <DockTab $wide>Operazioni</DockTab>
              <PinButton aria-label="Blocca"><Pin /></PinButton>
            </TabStrip>
            <Tree>
              <TreeRow $depth={0}><Twisty aria-label="Comprimi"><ChevronDown /></Twisty><SpindleIcon /><Label>Milling Head - 6 elementi</Label></TreeRow>
              <TreeRow $depth={1}><Twisty aria-label="Comprimi"><ChevronDown /></Twisty><StationIcon /><Label>Stazione 1</Label></TreeRow>
              <TreeRow $depth={2}><Twisty aria-label="Comprimi"><ChevronDown /></Twisty><HolderIcon /><Label>MillToolHolder_CAT-40</Label></TreeRow>
              <TreeRow $depth={3} $selected><Twisty as="span" /><Cutter round /><Label>T 2  BallD12</Label></TreeRow>
              {assemblies.map((a) => (
                <TreeRow key={a.name} $depth={2}>
                  <Twisty aria-label="Espandi"><ChevronRight /></Twisty>
                  <HolderCutter />
                  <Cutter round={a.round} />
                  <Label>{a.name}</Label>
                  <RowMarks>
                    {a.check && <Check />}
                    {a.bad ? <BadDatabase /> : <MarkSlot />}
                  </RowMarks>
                </TreeRow>
              ))}
            </Tree>
            <Unmounted>Elementi smontati</Unmounted>
            <TabStrip $top>
              <DockTab $active>Proprietà <Cross /></DockTab>
              <PinButton aria-label="Blocca"><Pin /></PinButton>
            </TabStrip>
            <PropertyPane>
              <PropertyTable>
                <colgroup><col width="173" /><col /></colgroup>
                <thead><tr><th>Tasto</th><th>Valore</th></tr></thead>
                <tbody>
                  {properties.map((p, i) => (
                    <tr key={p.name}>
                      <td><PropertyName $bold={p.group}><TreeGuide i={i} group={p.group} />{p.name}</PropertyName></td>
                      <td>{p.value}</td>
                    </tr>
                  ))}
                </tbody>
              </PropertyTable>
            </PropertyPane>
            <HScroll>
              <button aria-label="Scorri a sinistra"><Icon w={5} h={7}><path d="M4 .6L1.200 3.500 4 6.400" stroke="#333" strokeWidth="1.200" /></Icon></button>
              <HThumb />
              <button aria-label="Scorri a destra"><Icon w={8} h={7}><path d="M1 .6l2.800 2.900L1 6.400" stroke="#333" strokeWidth="1.200" /></Icon></button>
            </HScroll>
          </LeftDock>

          <CenterDock>
            <Viewport>
              <ToolScene />
              <MachineBadge><MachineIcon size={34} /></MachineBadge>
              <ViewTools>
                <button aria-label="Ruota"><Icon w={11}><circle cx="5.500" cy="5.500" r="4" stroke="#222" strokeWidth="1.200" strokeDasharray="7 1.400" /></Icon></button>
                <button aria-label="Sposta"><Icon w={11}><path d="M5.500 0v11M0 5.500h11" stroke="#222" strokeWidth="1.200" /><path d="M5.500 0l1.500 2H4zM5.500 11L4 9h3zM0 5.500L2 4v3zM11 5.500L9 7V4z" fill="#222" /></Icon></button>
                <button aria-label="Zoom"><Magnifier mark="M4.500 2.500v4M2.500 4.500h4" /></button>
                <button aria-label="Zoom area"><Magnifier mark="M3 3.500h3v2H3z" /></button>
                <ViewMode>
                  <Icon w={12}>
                    <path d="M3.500 1h8v7l-2 2.500h-6z" fill="#d9dde3" stroke="#444" strokeWidth=".8" />
                    <path d="M6 1v4M9 1v4M3.500 3h8" stroke="#555" strokeWidth=".8" />
                    <path d="M.500 4h6v7h-6z" fill="#5b9bd8" stroke="#2d5f96" strokeWidth=".7" />
                  </Icon>
                  Personalizzato
                </ViewMode>
                <button aria-label="Visibilità"><Icon w={11} h={8}><path d="M1 5Q5.500 0 10 5" stroke="#444" strokeWidth="1.100" /><circle cx="5.500" cy="4.500" r="1.700" fill="#333" /></Icon></button>
                <button aria-label="Seleziona"><Icon w={12} h={11}><path d="M7 3l4 1v4L8 11 4 9z" fill="#eef3f8" stroke="#8aa" strokeWidth=".6" /><path d="M1 4l3-1V.5L9 4v3.500L6 9z" fill="#1c5fa8" /></Icon></button>
              </ViewTools>
              <PopOut aria-label="Finestra separata">
                <Icon w={9}><path d="M.500.500h8v8h-8z" fill="#f5f5f5" stroke="#555" strokeWidth=".8" /><path d="M2.500 6.500l4-4M3.500 2.500h3v3" stroke="#444" strokeWidth=".9" /></Icon>
              </PopOut>
            </Viewport>
            <TabStrip $top>
              <DockTab $active $wide>Finestra Eventi <Cross /></DockTab>
              <PinButton aria-label="Blocca"><Pin /></PinButton>
            </TabStrip>
            <EventBar>
              <TrashButton aria-label="Svuota">
                <Icon w={9} h={11}><path d="M0 2h9M3 2V.6h3V2M1.200 2l.5 8.400h5.600L7.800 2M3.200 4v4.500M4.500 4v4.500M5.800 4v4.500" stroke="#444" strokeWidth=".8" /></Icon>
              </TrashButton>
              <FilterBox>
                <FilterSelect aria-label="Filtro" defaultValue="Tutti"><option>Tutti</option></FilterSelect>
                <ChevronDown color="#888" />
              </FilterBox>
              <Divider />
              <Counter>
                <Icon w={11}><circle cx="5.500" cy="5.500" r="5" fill="#c5202e" /><path d="M3.500 3.500l4 4M7.500 3.500l-4 4" stroke="#fff" strokeWidth="1.600" /></Icon>
                0 Errori
              </Counter>
              <Counter>
                <Icon w={11}><path d="M5.500.5L10.800 10.500H.2z" fill="#e4b52a" /><path d="M5.500 4v3.200M5.500 8.200v1.200" stroke="#fff" strokeWidth="1.200" /></Icon>
                0 Allarmi
              </Counter>
              <Counter>
                <Icon w={11}><circle cx="5.500" cy="5.500" r="5" fill="#2a9fc4" /><path d="M5.500 4.700v4M5.500 2.300v1.400" stroke="#fff" strokeWidth="1.500" /></Icon>
                0 Messaggi
              </Counter>
            </EventBar>
            <EventTable>
              <colgroup><col width="17" /><col width="46" /><col /><col width="47" /><col width="99" /></colgroup>
              <thead>
                <tr>
                  <th aria-label="Stato" />
                  <th aria-label="Gerarchia">
                    <HeadCell $center><Icon w={9} h={10}><path d="M0 0h4v3H0zM5 3.500h4v2.500H5zM5 7.500h4V10H5z" fill="#777" /><path d="M2 3v6h3M2 5h3" stroke="#777" strokeWidth=".9" /></Icon></HeadCell>
                  </th>
                  <th>
                    <HeadCell><Icon w={11}><rect x=".7" y=".7" width="9.600" height="9.600" rx="2" stroke="#666" strokeWidth="1.100" /><path d="M3 3.500h5M3 5.500h5M3 7.500h5" stroke="#666" strokeWidth=".8" /></Icon>Descrizione</HeadCell>
                  </th>
                  <th>
                    <HeadCell>
                      <Icon w={11}><circle cx="5.500" cy="6" r="4.200" stroke="#666" strokeWidth=".9" /><path d="M5.500 3.500V6h2M.8 2.500L2.800.8M10.200 2.500L8.200.8" stroke="#666" strokeWidth=".9" /></Icon>
                      Tempo
                      <SortMark><SmallArrow color="#222" /></SortMark>
                    </HeadCell>
                  </th>
                  <th>
                    <HeadCell><Icon w={11} h={12}><circle cx="5.500" cy="7" r="4.200" stroke="#555" strokeWidth="1.100" /><path d="M5.500 4.500V8M4 .8h3M5.500 1v2" stroke="#555" strokeWidth="1.100" /></Icon>Tempo di simulazione</HeadCell>
                  </th>
                </tr>
              </thead>
            </EventTable>
          </CenterDock>

          <Dock>
            <TabStrip>
              <DockTab $active $wide>Programma <Cross /></DockTab>
              <PinButton aria-label="Blocca"><Pin /></PinButton>
            </TabStrip>
            <ProgramList>
              {program.map((row, i) => (
                <ProgramRow key={i} $kind={row.kind} $selected={row.selected}>
                  <IconSlot>{row.kind === "tool" ? <Cutter /> : row.kind === "link" ? <LinkIcon /> : row.icon}</IconSlot>
                  <Label>{row.name}</Label>
                  {row.lamp && <StatusLamp $color={row.lamp} />}
                </ProgramRow>
              ))}
            </ProgramList>
            <Brand>
              <BrandMark />
              <BrandLine>ACCADEMIA</BrandLine>
              <BrandLine $gold>DELL'INNOVAZIONE</BrandLine>
            </Brand>
          </Dock>
        </Workspace>

        <StatusBar>
          <span>Prossimo Comando</span>
          <Coordinates>{"-23938.6823 mm  -2031.8537 mm  0.0000 mm"}</Coordinates>
          <StatusTool aria-label="Filtro selezione">
            <Icon w={12}><path d="M1.500 1v8.500L4 7.500l1.500 3.500 1.200-.6L5.300 7H8z" fill="#fff" stroke="#444" strokeWidth=".8" /><path d="M5.500 1H12L9.700 3.500V6L8 5V3.500z" fill="#2d5f96" /></Icon>
          </StatusTool>
          <StatusTool aria-label="Colori">
            <Icon w={12}><path d="M1 2.500L4.500 1 7 3 3.500 5z" fill="#e87a2a" /><path d="M1 7l3-1.500 3 2L4 10z" fill="#e0a020" /><path d="M6 7l3-1.500 2.500 2L8.500 11 5.500 9.500z" fill="#3b9c48" /><path d="M8 1.500q3 .5 2.500 3.500" stroke="#333" /></Icon>
          </StatusTool>
          <StatusTool $on aria-label="Punto">
            <Icon w={12}><path d="M0 6h12" stroke="#222" strokeWidth="1.300" /><rect x="4" y="4" width="4" height="4" rx="1" fill="#7fd06a" stroke="#222" strokeWidth=".9" /></Icon>
          </StatusTool>
          <StatusTool aria-label="Intersezione">
            <Icon w={12}><path d="M1.500 1.500l9 9.500" stroke="#333" strokeWidth="1.400" /><path d="M10 1L2 11" stroke="#a0202e" strokeWidth="1.400" /></Icon>
          </StatusTool>
          <StatusTool aria-label="Griglia">
            <Icon w={12}><path d="M2.500 1v10M5 1v10M7.500 1v10M10 1v10M1 2.500h10M1 5h10M1 7.500h10M1 10h10" stroke="#5c80b8" strokeWidth=".9" /></Icon>
          </StatusTool>
          <StatusTool $on aria-label="Aiuto mouse">
            <Icon w={12}><rect x="5" y="2.500" width="6.500" height="9" rx="2.500" stroke="#222" /><path d="M5 6h6.500M8.200 2.500V6M1 2q0-1.300 1.500-1.300T4 2q0 .8-1.500 1.400v.6M2.500 5v1" stroke="#222" strokeWidth=".9" /></Icon>
          </StatusTool>
          <StatusTool $on aria-label="Elenco">
            <Icon w={12}><path d="M5.500 2.500H11M5.500 6H11M5.500 9.500H11" stroke="#333" strokeWidth="1.200" /><path d="M1 1.500h3v2H1zM1 5h3v2H1z" fill="#c5303c" /><path d="M1 8.500h3v2H1z" fill="#b05060" /></Icon>
          </StatusTool>
          <ProgressBox />
          <ShareBar>
            <ShareState>
              <Icon w={8}><path d="M1.500 1L3 .6 4 3l-.9.8q.6 1.300 1.800 2L6 5.300 7.500 7 6.500 8Q2 7.500 1.500 1z" fill="currentColor" /></Icon>
              Sei in condivisione schermo
              <Icon w={8}><path d="M4 .5l3 1v3Q7 7 4 8 1 7 1 4.500v-3z" fill="currentColor" /><path d="M2.500 4.200l1.200 1.200 2-2.200" stroke="#2ff05c" strokeWidth=".9" /></Icon>
            </ShareState>
            <ShareStop><Icon w={6}><path d="M0 0h6v6H0z" fill="#fff" /></Icon>Interrompi condivisione</ShareStop>
          </ShareBar>
        </StatusBar>
      </Frame>
    </Screen>
  );
}
